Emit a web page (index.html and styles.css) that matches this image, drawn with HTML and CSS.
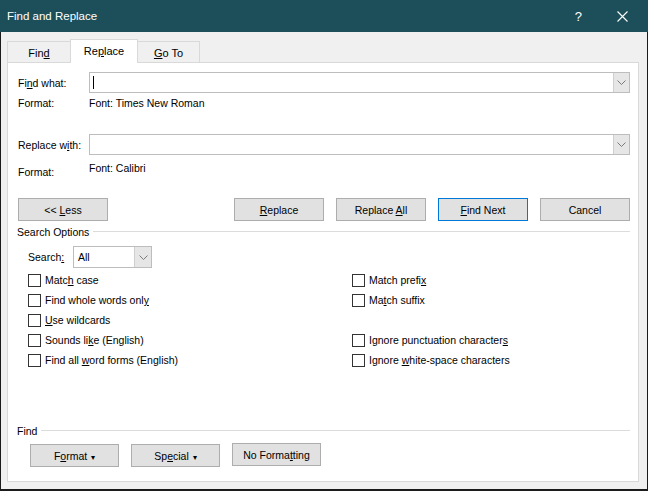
FILE: index.html
```html
<!DOCTYPE html>
<html lang="en">
<head>
    <meta charset="UTF-8">
    <title>Find and Replace</title>
    <link rel="stylesheet" href="styles.css">
</head>
<body>
    <div class="window">
        <div class="titlebar">
            <span class="title">Find and Replace</span>
            <span class="help">?</span>
            <span class="close">
                <svg width="11" height="11" viewBox="0 0 11 11"><path d="M0.5 0.5 L10.5 10.5 M10.5 0.5 L0.5 10.5" stroke="#fff" stroke-width="1.1" fill="none"/></svg>
            </span>
        </div>

        <div class="client">
            <!-- tabs -->
            <div class="tabs">
                <div class="tab tab-find"><span>Fin<u>d</u></span></div>
                <div class="tab tab-replace active"><span>Re<u>p</u>lace</span></div>
                <div class="tab tab-goto"><span><u>G</u>o To</span></div>
            </div>

            <div class="panel">
                <div class="field">
                    <span class="label">Fi<u>n</u>d what:</span>
                    <div class="combo">
                        <span class="caret"></span>
                        <span class="drop"><svg width="9" height="5" viewBox="0 0 9 5"><path d="M0.5 0.5 L4.5 4.5 L8.5 0.5" stroke="#7a7a7a" fill="none"/></svg></span>
                    </div>
                </div>
                <div class="format format-find">
                    <span class="label">Format:</span>
                    <span class="value">Font: Times New Roman</span>
                </div>

                <div class="field field-replace">
                    <span class="label">Replace w<u>i</u>th:</span>
                    <div class="combo">
                        <span class="drop"><svg width="9" height="5" viewBox="0 0 9 5"><path d="M0.5 0.5 L4.5 4.5 L8.5 0.5" stroke="#7a7a7a" fill="none"/></svg></span>
                    </div>
                </div>
                <div class="format format-replace">
                    <span class="label">Format:</span>
                    <span class="value">Font: Calibri</span>
                </div>

                <div class="actions">
                    <button class="btn">&lt;&lt; <u>L</u>ess</button>
                    <div class="actions-right">
                        <button class="btn"><u>R</u>eplace</button>
                        <button class="btn">Replace <u>A</u>ll</button>
                        <button class="btn default"><u>F</u>ind Next</button>
                        <button class="btn">Cancel</button>
                    </div>
                </div>

                <div class="group">
                    <span>Search Options</span>
                    <span class="rule"></span>
                </div>

                <div class="search-row">
                    <span class="label">Search<u>:</u></span>
                    <div class="select">
                        <span class="select-text">All</span>
                        <span class="drop"><svg width="9" height="5" viewBox="0 0 9 5"><path d="M0.5 0.5 L4.5 4.5 L8.5 0.5" stroke="#7a7a7a" fill="none"/></svg></span>
                    </div>
                </div>

                <div class="options">
                    <label class="check"><span class="box"></span><span>Matc<u>h</u> case</span></label>
                    <label class="check"><span class="box"></span><span>Match prefi<u>x</u></span></label>
                    <label class="check"><span class="box"></span><span>Find whole words onl<u>y</u></span></label>
                    <label class="check"><span class="box"></span><span>Ma<u>t</u>ch suffix</span></label>
                    <label class="check"><span class="box"></span><span><u>U</u>se wildcards</span></label>
                    <span></span>
                    <label class="check"><span class="box"></span><span>Sounds li<u>k</u>e (English)</span></label>
                    <label class="check"><span class="box"></span><span>Ignore punctuation character<u>s</u></span></label>
                    <label class="check"><span class="box"></span><span>Find all <u>w</u>ord forms (English)</span></label>
                    <label class="check"><span class="box"></span><span>Ignore <u>w</u>hite-space characters</span></label>
                </div>

                <div class="group group-find">
                    <span>Find</span>
                    <span class="rule"></span>
                </div>

                <div class="bottom">
                    <button class="btn">F<u>o</u>rmat <span class="arrow">&#9662;</span></button>
                    <button class="btn">Sp<u>e</u>cial <span class="arrow">&#9662;</span></button>
                    <button class="btn btn-nofmt">No Forma<u>t</u>ting</button>
                </div>
            </div>
        </div>
    </div>
</body>
</html>
```

FILE: styles.css
```css
body {
    margin: 0;
    font-family: "Liberation Sans", Arial, sans-serif;
    font-size: 10.5px;
    color: #000;
    background: #1a1a1a;
}
u {
    text-decoration-thickness: 1px;
    text-underline-offset: 1px;
}
.window {
    width: 648px;
    height: 491px;
    box-sizing: border-box;
    border: 1px solid #1b1b1b;
    border-top: none;
    border-bottom-width: 2px;
    background: #f0f0f0;
    display: flex;
    flex-direction: column;
}
.titlebar {
    height: 32px;
    background: #1d4f5b;
    color: #fff;
    display: flex;
    align-items: center;
    margin-left: -1px;
    margin-right: -1px;
    padding-left: 7px;
}
.title {
    font-size: 11.5px;
    flex: 1;
}
.help {
    font-size: 13px;
    margin-right: 35px;
}
.close {
    display: flex;
    margin-right: 20px;
}
.client {
    flex: 1;
    display: flex;
    flex-direction: column;
    padding: 0 8px 7px 6px;
}
.tabs {
    height: 30px;
    display: flex;
    align-items: flex-end;
}
.tab {
    box-sizing: border-box;
    height: 21px;
    border: 1px solid #d9d9d9;
    border-bottom: none;
    display: flex;
    align-items: center;
    justify-content: center;
    padding-top: 1px;
    background: #f0f0f0;
    font-size: 11px;
}
.tab-find {
    width: 64px;
}
.tab-replace {
    width: 68px;
    margin-left: -1px;
}
.tab-goto {
    width: 63px;
    margin-left: -1px;
}
.tab.active {
    height: 24px;
    background: #fff;
    margin-bottom: -1px;
    position: relative;
    z-index: 1;
    padding-bottom: 2px;
}
.panel {
    flex: 1;
    background: #fff;
    border: 1px solid #d9d9d9;
    padding: 9px 8px 0 10px;
    display: flex;
    flex-direction: column;
}
.field {
    display: flex;
    align-items: center;
    height: 21px;
}
.field .label,
.format .label {
    width: 71px;
    flex: none;
}
.combo {
    flex: 1;
    height: 21px;
    box-sizing: border-box;
    border: 1px solid #bdbdbd;
    display: flex;
    align-items: center;
    justify-content: space-between;
}
.caret {
    width: 1px;
    height: 13px;
    background: #000;
    margin-left: 3px;
}
.drop {
    width: 16px;
    height: 19px;
    box-sizing: border-box;
    margin-left: auto;
    background: #e6e6e6;
    border-left: 1px solid #cfcfcf;
    display: flex;
    align-items: center;
    justify-content: center;
}
.format {
    display: flex;
    line-height: 14px;
}
.format-find {
    margin-top: 3px;
}
.field-replace {
    margin-top: 24px;
}
.format-replace {
    margin-top: 6px;
}
.format-replace .label {
    padding-top: 4px;
}
.btn {
    width: 90px;
    height: 23px;
    box-sizing: border-box;
    background: #e1e1e1;
    border: 1px solid #adadad;
    font-family: inherit;
    font-size: 10.5px;
    color: #000;
    padding: 0;
}
.btn.default {
    border-color: #0078d7;
}
.actions {
    margin-top: 19px;
    display: flex;
    justify-content: space-between;
}
.actions-right {
    display: flex;
    gap: 12px;
}
.group {
    display: flex;
    align-items: center;
    line-height: 14px;
    margin-top: 4px;
    margin-left: -1px;
}
.rule {
    flex: 1;
    height: 1px;
    background: #dcdcdc;
    margin-left: 4px;
    margin-top: -1px;
}
.search-row {
    margin-top: 7px;
    margin-left: 10px;
    display: flex;
    align-items: center;
}
.search-row .label {
    width: 45px;
}
.select {
    width: 79px;
    height: 22px;
    box-sizing: border-box;
    border: 1px solid #bdbdbd;
    display: flex;
    align-items: center;
}
.select-text {
    padding-left: 4px;
}
.select .drop {
    height: 20px;
    width: 17px;
}
.options {
    margin-top: 2px;
    margin-left: 10px;
    display: grid;
    grid-template-columns: 324px 1fr;
    grid-auto-rows: 20px;
}
.check {
    display: flex;
    align-items: center;
}
.box {
    width: 13px;
    height: 13px;
    box-sizing: border-box;
    border: 1px solid #333;
    background: #fff;
    margin-right: 4px;
}
.group-find {
    margin-top: 54px;
}
.bottom {
    margin-top: 6px;
    margin-left: 12px;
    display: flex;
    gap: 12px;
}
.bottom .btn {
    width: 89px;
}
.btn-nofmt {
    margin-top: -1px;
}
.arrow {
    font-size: 8px;
    margin-left: 1px;
}
```
